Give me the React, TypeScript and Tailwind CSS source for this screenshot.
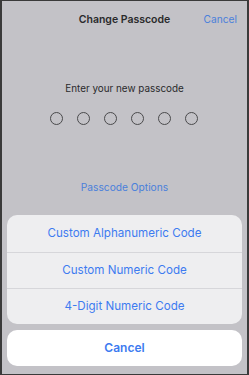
import React from "react";

export default function App() {
  const font = { fontFamily: "Inter, 'Liberation Sans', sans-serif" };
  return (
    <div
      className="w-[249px] h-[375px] bg-[#c3c2c7] border-l-2 border-r-2 border-t border-b border-[#3a3a3a] flex flex-col overflow-hidden"
      style={font}
    >
      <div className="h-[38px] grid grid-cols-[1fr_auto_1fr] items-center">
        <div />
        <div className="text-[10.5px] font-semibold text-[#2a2a2c]">Change Passcode</div>
        <div className="text-right pr-[10px] text-[10.2px] text-[#4a80db]">Cancel</div>
      </div>
      <div className="mt-[42px] h-[14px] leading-[14px] text-center text-[9.9px] text-[#2a2a2c]">
        Enter your new passcode
      </div>
      <div className="mt-[17px] flex justify-center gap-[14px] pr-[1px]">
        {[0, 1, 2, 3, 4, 5].map((i) => (
          <div key={i} className="w-[13px] h-[13px] rounded-full border border-[#4a4a4c]" />
        ))}
      </div>
      <div className="mt-[55px] h-[14px] leading-[14px] text-center text-[10.2px] text-[#4a80db]">
        Passcode Options
      </div>
      <div className="mt-[21px] mx-[5px] rounded-[10px] bg-[#eeeef0] flex flex-col overflow-hidden">
        <div className="h-[37px] flex items-center justify-center text-[11.6px] text-[#3d7bf0]">
          Custom Alphanumeric Code
        </div>
        <div className="h-px bg-[#d6d6da]" />
        <div className="h-[35px] flex items-center justify-center text-[11.6px] text-[#3d7bf0]">
          Custom Numeric Code
        </div>
        <div className="h-px bg-[#d6d6da]" />
        <div className="h-[35px] flex items-center justify-center text-[11.6px] text-[#3d7bf0]">
          4-Digit Numeric Code
        </div>
      </div>
      <div className="mt-[6px] mx-[5px] h-[36px] rounded-[10px] bg-white flex items-center justify-center text-[12px] font-semibold text-[#3d7bf0]">
        Cancel
      </div>
    </div>
  );
}
